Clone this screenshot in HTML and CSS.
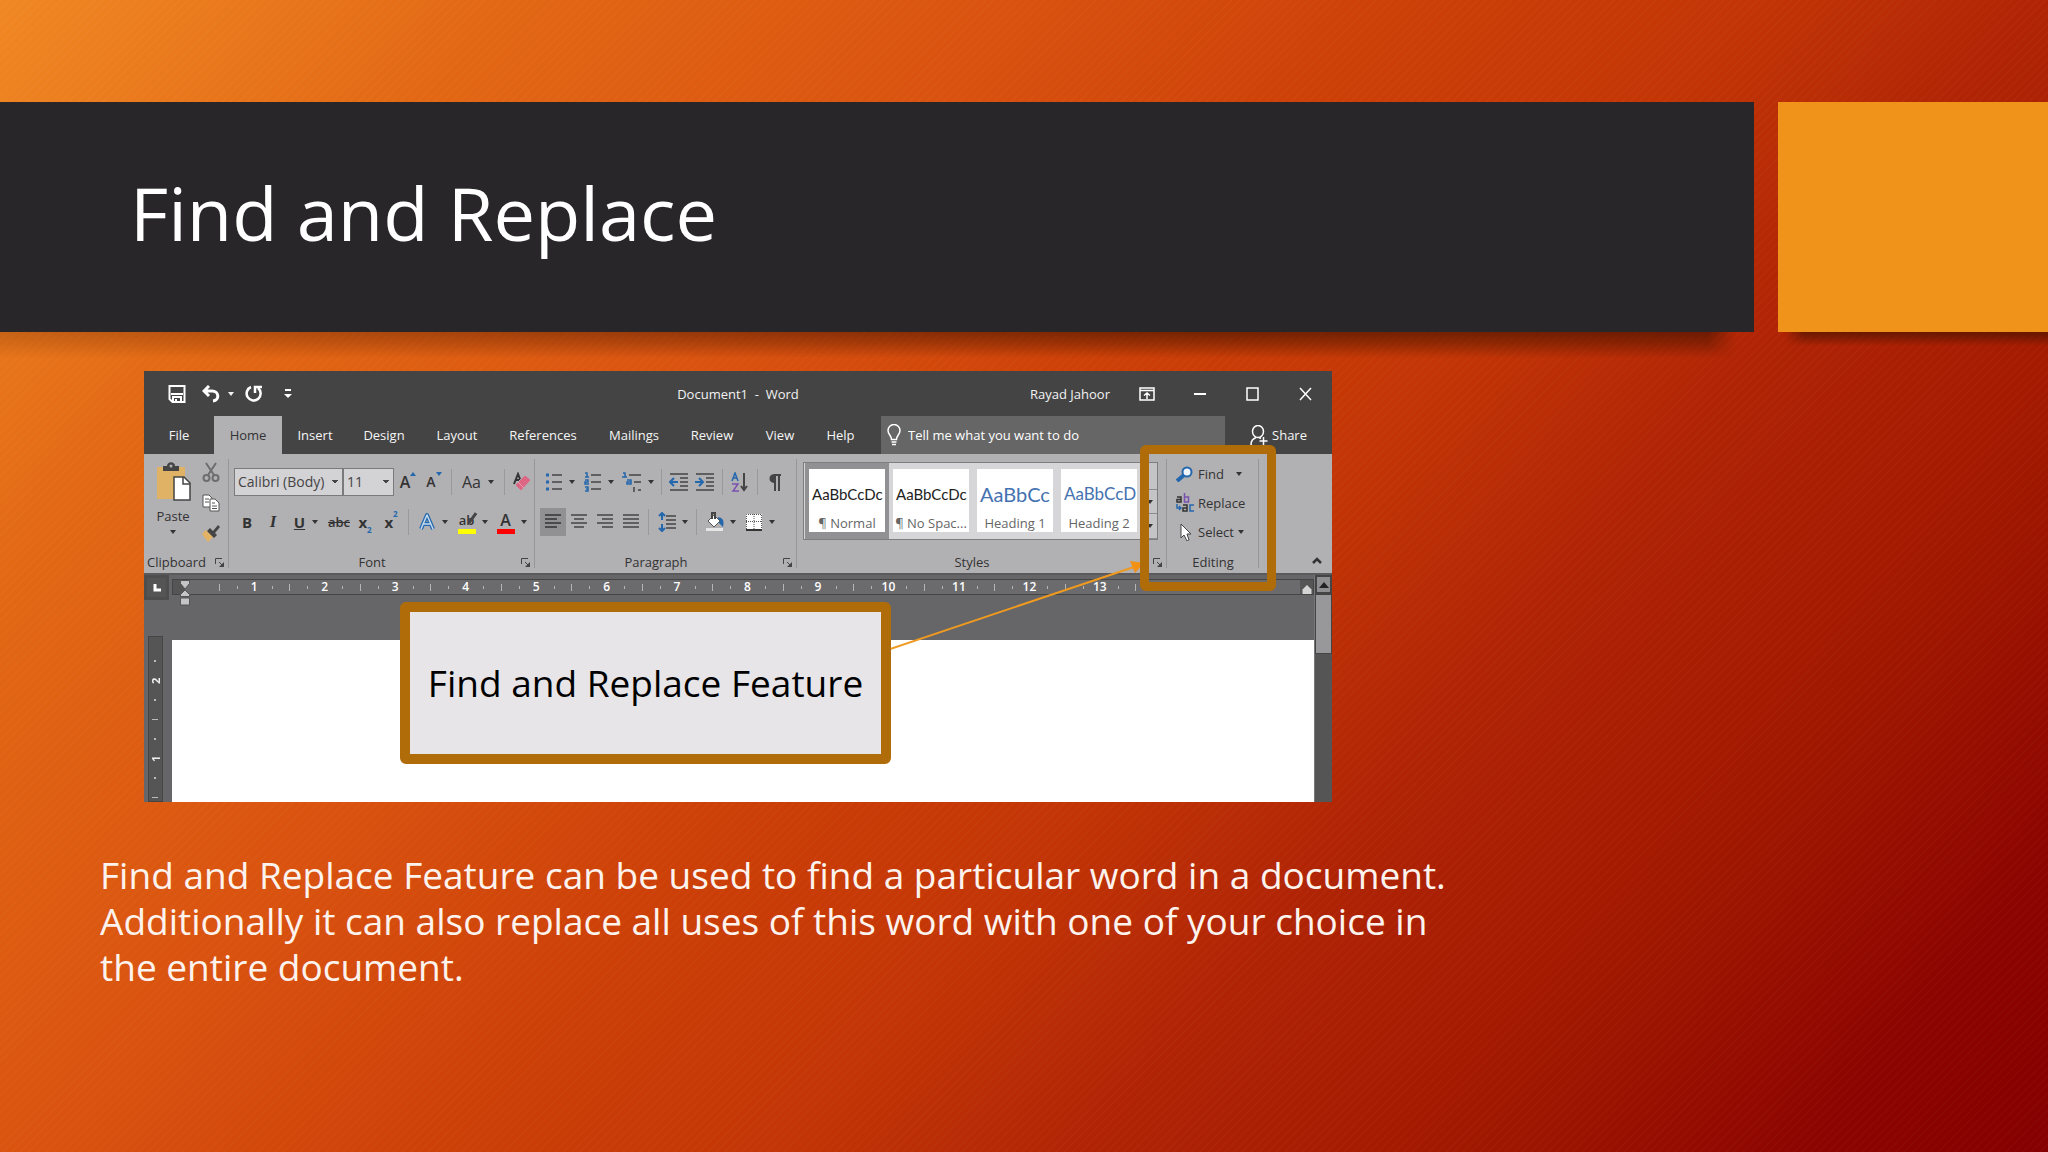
FILE: index.html
```html
<!DOCTYPE html>
<html lang="en">
<head>
<meta charset="utf-8">
<title>Find and Replace</title>
<link rel="stylesheet" href="styles.css">
</head>
<body>
<header class="banner">
  <div class="banner-title"><h1>Find and Replace</h1></div>
  <div class="banner-accent"></div>
</header>
<main class="content">
  <section class="word" aria-label="Word window">
    <div class="titlebar">
      <div class="quick">
        <button class="q-save" aria-label="Save"><svg width="18" height="20" viewBox="0 0 18 20" fill="none" stroke="#fff" stroke-width="2"><path d="M1.500 2h15v16h-12l-3-3z M3 10h12"/><path d="M5 18v-5h8v5" /><path d="M8 15v3"/></svg></button>
        <button class="q-undo" aria-label="Undo"><svg width="18" height="18" viewBox="0 0 18 18" fill="none" stroke="#fff" stroke-width="3"><path d="M7 1L2 6l5 5M2 6h8c7 0 8 9 1 10"/></svg><i class="caret"></i></button>
        <button class="q-redo" aria-label="Repeat"><svg width="18" height="18" viewBox="0 0 18 18" fill="none" stroke="#fff" stroke-width="2.500"><path d="M6 2a7 7 0 1 0 7 1M10 8V2h7"/></svg></button>
        <button class="q-more" aria-label="Customize toolbar"><svg width="8" height="10" viewBox="0 0 8 10" fill="#fff"><path d="M1 0h6v2H1zM0 5h8L4 9z"/></svg></button>
      </div>
      <div class="doc-title">Document1 &nbsp;- &nbsp;Word</div>
      <div class="win">
        <span>Rayad Jahoor</span>
        <button aria-label="Ribbon display options"><svg width="16" height="14" viewBox="0 0 16 14" fill="none" stroke="#fff" stroke-width="1.500"><path d="M1 1h14v12H1zM1 3.500h14M8 12V6M5 8.500L8 6l3 2.500"/></svg></button>
        <button aria-label="Minimize"><svg width="12" height="14" stroke="#fff" stroke-width="2"><path d="M0 7h12"/></svg></button>
        <button aria-label="Maximize"><svg width="13" height="14" fill="none" stroke="#fff" stroke-width="1.500"><path d="M1 1h11v12H1z"/></svg></button>
        <button aria-label="Close"><svg width="13" height="14" stroke="#fff" stroke-width="1.500"><path d="M1 1l11 12M12 1L1 13"/></svg></button>
      </div>
    </div>
    <nav class="tabs">
      <button>File</button><button class="on">Home</button><button>Insert</button><button>Design</button><button>Layout</button><button>References</button><button>Mailings</button><button>Review</button><button>View</button><button>Help</button>
      <label class="tell"><svg width="14" height="22" viewBox="0 0 14 22" fill="none" stroke="#fff" stroke-width="1.500"><path d="M4.500 15.500c0-4-3.500-5-3.500-9a6 6 0 0 1 12 0c0 4-3.500 5-3.500 9zM4.500 18h5M5 20.500h4"/></svg><input type="text" placeholder="Tell me what you want to do" aria-label="Tell me what you want to do"></label>
      <button class="share"><svg width="18" height="20" viewBox="0 0 18 20" fill="none" stroke="#fff" stroke-width="1.500"><ellipse cx="8" cy="6.500" rx="5.500" ry="6"/><path d="M1 20c0-5 2-6 5-7.500M9 12.500l2 1M13.500 12v8M9.500 16h8"/></svg>Share</button>
    </nav>
    <div class="ribbon">
      <section class="group g-clip">
        <div class="tools clip">
          <button class="paste"><svg width="36" height="40" viewBox="0 0 36 40"><path fill="#dfb265" d="M2 5h28v32H2z"/><path fill="#444" d="M8 4h4c0-5 8-5 8 0h4v5H8z"/><circle cx="16" cy="4" r="1.500" fill="#b1b0b3"/><path fill="#fff" stroke="#444" stroke-width="1.500" d="M19 15h10l6 6v17H19z"/><path fill="none" stroke="#444" stroke-width="1.500" d="M28 15v7h7"/></svg>Paste<i class="caret"></i></button>
          <div class="stack">
            <button aria-label="Cut"><svg width="18" height="20" viewBox="0 0 18 20" fill="none" stroke="#6d6d6d" stroke-width="2"><path d="M4 1l8 12M14 1L6 13"/><circle cx="4.500" cy="16" r="3"/><circle cx="13.500" cy="16" r="3"/></svg></button>
            <button aria-label="Copy"><svg width="18" height="18" viewBox="0 0 18 18" fill="#fff" stroke="#555"><path d="M1 1h6l3 3v9H1z"/><path d="M8 5h5l4 4v8H8z"/><path d="M3 5h4M3 8h4M10 9h3M10 12h5M10 14.500h5"/></svg></button>
            <button aria-label="Format painter"><svg width="18" height="18" viewBox="0 0 18 18"><path fill="#e4b265" d="M0 10l4-4 7 7-5 5z"/><path fill="#444" d="M5 7l3-3 3 3 5-6 2 2-5 6 2 2-3 3z"/></svg></button>
          </div>
        </div>
        <footer><span>Clipboard</span><button class="launch" aria-label="Clipboard options"><svg width="9" height="9"><use href="#launch"/></svg></button></footer>
      </section>
      <section class="group g-font">
        <div class="tools">
          <div class="row">
            <select class="family" aria-label="Font"><option>Calibri (Body)</option></select><select class="size" aria-label="Font size"><option>11</option></select>
            <button class="t grow" aria-label="Grow font"><b>A</b><svg width="6" height="4"><path d="M0 4l3-4 3 4z" fill="#2467ad"/></svg></button>
            <button class="t shrink" aria-label="Shrink font"><b>A</b><svg width="6" height="4"><path d="M0 0l3 4 3-4z" fill="#2467ad"/></svg></button>
            <i class="sep"></i><button class="s wide">Aa<i class="caret"></i></button><i class="sep"></i>
            <button class="t" aria-label="Clear formatting"><svg width="18" height="20" viewBox="0 0 18 20"><path d="M1 12L5 2l4 10M2 8h6" fill="none" stroke="#333" stroke-width="2"/><path fill="#dc6684" stroke="#b1b0b3" d="M2 13L12 3l6 5L8 19z"/><path d="M5 10l6 6" stroke="#e6a0b2"/></svg></button>
          </div>
          <div class="row">
            <button class="t bold">B</button><button class="t ital">I</button><button class="s bold"><u>U</u><i class="caret"></i></button><button class="t strike">abc</button><button class="t bold">x<sub>2</sub></button><button class="t bold">x<sup>2</sup></button><i class="sep"></i>
            <button class="s" aria-label="Text effects"><svg width="16" height="18" viewBox="0 0 16 18" fill="none" stroke-linejoin="round"><path d="M2 16L8 2l6 14M4.500 11h7" stroke="#2467ad" stroke-width="4"/><path d="M2 16L8 2l6 14M4.500 11h7" stroke="#c5dcee" stroke-width="1.500"/></svg><i class="caret"></i></button>
            <button class="s mark"><span class="hl">ab</span><svg class="pen" width="10" height="13" viewBox="0 0 10 13"><path d="M9 1L2 11" stroke="#444" stroke-width="3"/></svg><i class="caret"></i></button>
            <button class="s mark"><span class="fc">A</span><i class="caret"></i></button>
          </div>
        </div>
        <footer><span>Font</span><button class="launch" aria-label="Font options"><svg width="9" height="9"><use href="#launch"/></svg></button></footer>
      </section>
      <section class="group g-para">
        <div class="tools">
          <div class="row">
            <button class="s" aria-label="Bullets"><svg width="18" height="20" stroke="#444" stroke-width="1.500"><path d="M7 3h10M7 10h10M7 17h10"/><path stroke="#2467ad" stroke-width="3" d="M1 3h3M1 10h3M1 17h3"/></svg><i class="caret"></i></button><button class="s" aria-label="Numbering"><svg width="18" height="20" fill="none" stroke="#444" stroke-width="1.500"><path d="M7 3h10M7 10h10M7 17h10"/><path stroke="#2467ad" d="M1 1h2v4M1 5h4M1 8h3v2H1v2h4M1 15h3v4H1M2 17h2"/></svg><i class="caret"></i></button><button class="s" aria-label="Multilevel list"><svg width="20" height="20" fill="none" stroke="#444" stroke-width="1.500"><path d="M7 3h12M12 10h7M16 18h3M12 15v5"/><path stroke="#2467ad" d="M1 1h2v4M0 5h5M5 8h4v4H5v-2h4"/></svg><i class="caret"></i></button><i class="sep"></i>
            <button class="t" aria-label="Decrease indent"><svg width="20" height="20" fill="none" stroke="#444" stroke-width="1.500"><path d="M1 2h18M11 6h8M11 10h8M11 14h8M1 18h18"/><path stroke="#2467ad" stroke-width="2" d="M9 10H2M5 6l-4 4 4 4"/></svg></button><button class="t" aria-label="Increase indent"><svg width="20" height="20" fill="none" stroke="#444" stroke-width="1.500"><path d="M1 2h18M11 6h8M11 10h8M11 14h8M1 18h18"/><path stroke="#2467ad" stroke-width="2" d="M0 10h7M4 6l4 4-4 4"/></svg></button><i class="sep"></i>
            <button class="t" aria-label="Sort"><svg width="18" height="20" fill="none" stroke-width="2"><path stroke="#2467ad" stroke-width="1.500" d="M1 9l3-8 3 8M2 6h4"/><path stroke="#7b52b0" stroke-width="1.500" d="M1 12h6l-5 7h6"/><path stroke="#444" d="M13 1v17M10 14l3 4 3-4"/></svg></button><i class="sep"></i><button class="t" aria-label="Show marks"><svg width="12" height="17"><path fill="#444" d="M12 0v2h-1v15H9V2H7v15H5V9C-1 9-1 0 5 0z"/></svg></button>
          </div>
          <div class="row">
            <button class="t sel" aria-label="Align left"><svg width="18" height="16" stroke="#333" stroke-width="1.500"><path d="M1 1h16M1 5h12M1 9h16M1 13h12"/></svg></button><button class="t" aria-label="Center"><svg width="18" height="16" stroke="#444" stroke-width="1.500"><path d="M1 1h16M4 5h10M1 9h16M4 13h10"/></svg></button><button class="t" aria-label="Align right"><svg width="18" height="16" stroke="#444" stroke-width="1.500"><path d="M1 1h16M6 5h11M1 9h16M6 13h11"/></svg></button><button class="t" aria-label="Justify"><svg width="18" height="16" stroke="#444" stroke-width="1.500"><path d="M1 1h16M1 5h16M1 9h16M1 13h16"/></svg></button><i class="sep"></i>
            <button class="s" aria-label="Line spacing"><svg width="18" height="20" fill="none" stroke="#444" stroke-width="1.500"><path d="M8 4h10M8 8h10M8 12h10M8 16h10"/><path stroke="#2467ad" stroke-width="2" d="M4 1v7M1 4l3-3 3 3M4 12v7M1 16l3 3 3-3"/></svg><i class="caret"></i></button><i class="sep"></i><button class="s" aria-label="Shading"><svg width="18" height="20" viewBox="0 0 18 20"><path fill="#2467ad" d="M12 5c6 1 6 5 5 10l-4-4z"/><path fill="#fff" stroke="#555" d="M2 9l6-6 6 6-6 6z"/><path fill="none" stroke="#444" stroke-width="2" d="M6 7V1h3v6"/><path fill="#e6e6e6" d="M0 16h17v3H0z"/></svg><i class="caret"></i></button><button class="s" aria-label="Borders"><svg width="18" height="18"><path fill="#fff" d="M1 1h16v16H1z"/><path fill="none" stroke="#555" stroke-dasharray="1 1" d="M1.500 16V1.500h15V16M9 1v15M1 8.500h16"/><path stroke="#333" stroke-width="2" d="M1 17h16"/></svg><i class="caret"></i></button>
          </div>
        </div>
        <footer><span>Paragraph</span><button class="launch" aria-label="Paragraph options"><svg width="9" height="9"><use href="#launch"/></svg></button></footer>
      </section>
      <section class="group g-styles">
        <div class="tools">
          <div class="gallery">
            <button class="card picked"><span class="sample">AaBbCcDc</span><span>¶ Normal</span></button>
            <button class="card"><span class="sample">AaBbCcDc</span><span>¶ No Spac...</span></button>
            <button class="card"><span class="sample h1">AaBbCc</span><span>Heading 1</span></button>
            <button class="card"><span class="sample h2">AaBbCcD</span><span>Heading 2</span></button>
            <div class="scroller"><button aria-label="Previous styles"></button><button aria-label="Next styles"><i class="caret"></i></button><button aria-label="More styles"><i class="caret"></i></button></div>
          </div>
        </div>
        <footer><span>Styles</span><button class="launch" aria-label="Styles options"><svg width="9" height="9"><use href="#launch"/></svg></button></footer>
      </section>
      <section class="group g-edit">
        <div class="tools edit">
          <button><svg width="18" height="16" viewBox="0 0 18 16"><path d="M1 15l7-6" stroke="#2467ad" stroke-width="4"/><circle cx="11" cy="6" r="4.500" fill="#eef4fa" stroke="#2467ad" stroke-width="2"/></svg>Find<i class="caret far"></i></button>
          <button><svg width="18" height="20" viewBox="0 0 18 20" fill="none" stroke-width="1.500"><path stroke="#333" d="M1 4h4v5H1V6.500h4"/><path stroke="#7b52b0" d="M8.500 0v9h4V4h-4"/><path stroke="#333" d="M7 12h4v6H7v-3h4"/><path stroke="#2467ad" d="M18 12h-4v6h4M1 11v4h4M3 13l2 2-2 2"/></svg>Replace</button>
          <button><svg width="18" height="18" viewBox="0 0 18 18"><path fill="#fff" stroke="#444" d="M5 1v14l3-3 3 6 2-1-2-6h4z"/></svg>Select<i class="caret"></i></button>
        </div>
        <footer><span>Editing</span></footer>
      </section>
      <button class="collapse" aria-label="Collapse ribbon"><svg width="10" height="8" fill="none" stroke="#333" stroke-width="2.500"><path d="M1 6l4-4 4 4"/></svg></button>
    </div>
    <div class="workspace">
      <div class="left-col">
        <div class="tabstop"><svg width="8" height="8" fill="none" stroke="#fff" stroke-width="3"><path d="M2 0v6h6"/></svg></div>
        <div class="vruler"><span>2</span><span>1</span></div>
      </div>
      <div class="middle">
        <div class="hruler"><div class="margin"><svg width="10" height="26" viewBox="0 0 10 26" fill="#c4c4c4" stroke="#555"><path d="M.500.500h9v3L5 9 .500 3.500zM5 10l4.500 4.500v2h-9v-2zM.500 18h9v7h-9z"/></svg></div><span>1</span><span>2</span><span>3</span><span>4</span><span>5</span><span>6</span><span>7</span><span>8</span><span>9</span><span>10</span><span>11</span><span>12</span><span>13</span><span></span><span></span><div class="tail"></div><div class="rmark"><svg width="10" height="9"><path d="M5 0l4.500 4.500V9h-9V4.500z" fill="#d4d4d4"/></svg></div></div>
        <div class="page"></div>
      </div>
      <div class="scroll"><button aria-label="Scroll up"><svg width="10" height="6"><path d="M0 6l5-6 5 6z" fill="#222"/></svg></button><div class="thumb"></div></div>
    </div>
    <svg class="arrow" viewBox="0 0 256 92" fill="none"><path d="M0 89L244 7" stroke="#ee9a20" stroke-width="2"/><path d="M240 1l14 2-9 10z" fill="#f29214"/></svg>
    <div class="highlight"></div>
    <div class="callout">Find and Replace Feature</div>
  </section>
  <p class="caption">Find and Replace Feature can be used to find a particular word in a document. Additionally it can also replace all uses of this word with one of your choice in the entire document.</p>
</main>
<svg width="0" height="0" class="defs"><symbol id="launch" viewBox="0 0 9 9"><path fill="none" stroke="#444" d="M.500 6V.500H7M4 4l4 4"/><path fill="#444" d="M9 4v5H4z"/></symbol></svg>
</body>
</html>
```
FILE: styles.css
```css
* { box-sizing: border-box; }
body {
  margin: 0;
  min-height: 100vh;
  padding-top: 102px;
  overflow-x: hidden;
  font-family: "Open Sans", "Noto Sans", sans-serif;
  background:
    repeating-linear-gradient(135deg, rgba(255,255,255,.02) 0 2px, transparent 2px 6px),
    linear-gradient(130deg, #f08823 0%, #e26714 17%, #d9520f 34%, #cc3f07 47%, #c33505 58%, #b02405 68%, #a01700 81%, #8c0400 92%, #850000 100%);
}
button, select, input { font: inherit; color: inherit; border: 0; background: none; padding: 0; margin: 0; }
svg { display: block; flex: none; }
.defs { position: absolute; }

.banner { display: flex; gap: 24px; min-height: 230px; }
.banner-title { flex: 1; display: flex; align-items: center; padding: 0 130px 8px; background: #282629; position: relative; }
.banner-accent { width: 270px; background: #f0931a; position: relative; }
.banner-title::after, .banner-accent::after {
  content: ""; position: absolute; top: 100%; height: 26px; left: 0; right: 18px;
  background: linear-gradient(rgba(70,20,0,.65), rgba(70,20,0,.4) 45%, transparent);
  mask-image: linear-gradient(90deg, rgba(0,0,0,.3), #000 70%, #000 calc(100% - 28px), transparent);
}
.banner-accent::after { height: 14px; left: 6px; right: 0; mask-image: linear-gradient(90deg, transparent, #000 20px); }
h1 { margin: 0; font-size: 74px; line-height: 96px; font-weight: 400; color: #fff; }

.content { padding: 39px 100px 60px; }
.caption { margin: 50px 0 0; max-width: 1380px; font-size: 37px; line-height: 46px; color: #fdf3ee; }

.word { position: relative; margin-left: 44px; max-width: 1188px; font-size: 13px; line-height: 18px; color: #333; }

.titlebar { display: grid; grid-template-columns: 1fr auto 1fr; align-items: center; height: 45px; background: #444; color: #f2f2f2; }
.quick { display: flex; align-items: center; padding-left: 24px; gap: 11px; }
.quick button { display: flex; align-items: center; gap: 8px; }
.q-save { padding-right: 5px; }
.quick .q-more { padding-left: 10px; }
.doc-title { white-space: nowrap; }
.win { display: flex; align-items: center; justify-content: flex-end; }
.win span { padding-right: 10px; }
.win button { width: 53px; display: flex; justify-content: center; }

.caret { flex: none; width: 0; height: 0; border: 3px solid transparent; border-top: 4px solid currentColor; border-bottom: 0; }

.tabs { display: grid; grid-template-columns: 70px 68px 66px 72px 74px 98px 84px 72px 64px 57px 12px 344px 1fr; height: 38px; background: #444; color: #f5f5f5; }
.tabs .on { background: #b1b0b3; color: #333; }
.tell { grid-column: 12; display: flex; align-items: center; gap: 7px; padding-left: 6px; background: #666; }
.tell input { flex: 1; min-width: 0; }
.tell input::placeholder { color: #fff; opacity: 1; }
.share { display: flex; align-items: center; justify-content: center; gap: 4px; }

.ribbon { display: flex; height: 119px; background: #b1b0b3; }
.group { display: flex; flex-direction: column; flex: none; position: relative; }
.group::after { content: ""; position: absolute; right: 0; top: 5px; bottom: 5px; border-right: 1px solid #969598; }
.g-clip { width: 85px; }
.g-font { width: 306px; }
.g-para { width: 262px; }
.g-styles { width: 370px; }
.g-edit { width: 92px; }
.tools { flex: 1; padding: 8px 5px 0; }
.group footer { display: flex; align-items: center; height: 22px; }
.group footer span { flex: 1; text-align: center; }
.launch { width: 20px; display: flex; justify-content: center; }
.row { display: flex; align-items: center; height: 40px; }
.row .t, .row .s { height: 28px; display: flex; align-items: center; justify-content: center; flex: none; position: relative; }
.t { width: 26px; }
.s { width: 40px; gap: 7px; }
.g-para .s { width: 39px; gap: 6px; }
.s.wide { width: 44px; font-size: 16px; }
.s.mark { width: 39px; gap: 6px; }
.sep { flex: none; width: 9px; height: 26px; background: linear-gradient(#99989b, #99989b) center / 1px 100% no-repeat; }
.sel { background: #919092; }
.bold { font-weight: 700; font-size: 15px; }
.ital { font: italic 700 17px "Liberation Serif", serif; }
.strike { font-weight: 600; text-decoration: line-through; }
.row sub, .row sup { font-size: 8px; line-height: 8px; color: #2467ad; }
.row sub { align-self: flex-end; padding-bottom: 2px; }
.row sup { align-self: flex-start; padding-top: 2px; }
.grow b, .shrink b { font-size: 16px; font-weight: 600; }
.shrink b { font-size: 14px; }
.grow svg, .shrink svg { align-self: flex-start; margin-top: 4px; }
.hl, .fc { width: 18px; line-height: 18px; text-align: center; font-weight: 600; border-bottom: 5px solid #ff0; }
.fc { border-color: #f00; font-size: 16px; }
.pen { position: absolute; left: 14px; top: 4px; }
.family, .size {
  appearance: none; height: 28px; border: 1px solid #7a797c; color: #444; font-size: 14px; padding-left: 3px; border-radius: 0;
  background: linear-gradient(to bottom left, #444 50%, transparent 50%) right 7px center / 3px 4px no-repeat,
    linear-gradient(to bottom right, #444 50%, transparent 50%) right 4px center / 3px 4px no-repeat, #d3d2d5;
}
.family { width: 109px; flex: none; }
.size { width: 51px; flex: none; }
.g-font .grow { margin-left: 1px; }

.clip { display: flex; padding: 8px 0 0; }
.paste { width: 58px; display: flex; flex-direction: column; align-items: center; gap: 6px; line-height: 16px; }
.stack { display: flex; flex-direction: column; gap: 12px; }

.gallery { display: flex; width: 355px; height: 78px; margin-left: 1px; border: 1px solid #7d7c7f; background: #d6d5d8; padding-left: 1px; }
.card { width: 84px; flex: none; border: 4px solid #d6d5d8; border-width: 6px 4px 7px; display: flex; flex-direction: column; align-items: center; justify-content: flex-end; background: #fff; color: #666; white-space: nowrap; }
.card.picked { border-color: #919093; }
.sample { align-self: stretch; padding: 0 0 6px 3px; text-align: left; font-family: Lato, sans-serif; font-size: 15px; line-height: 28px; color: #222; }
.sample.h1 { font-size: 20px; color: #4472b0; }
.sample.h2 { font-size: 17px; color: #4472b0; }
.scroller { flex: 1; display: grid; grid-template-rows: 27px 24px 1fr; }
.scroller button { border-left: 1px solid #8b8a8d; border-bottom: 1px solid #8b8a8d; display: flex; align-items: center; justify-content: center; background: #c4c3c6; }

.edit { display: flex; flex-direction: column; padding: 5px 0 0 9px; }
.edit button { display: flex; align-items: center; gap: 4px; height: 29px; }
.edit .far { margin-left: 8px; }
.collapse { margin: auto 10px 8px auto; }

.workspace { display: flex; height: 229px; background: #666568; border-top: 2px solid #5a595c; }
.left-col { width: 28px; flex: none; }
.tabstop { width: 25px; height: 25px; border: 3px solid #4e4e4e; display: flex; align-items: center; justify-content: center; background: #555; }
.vruler { width: 15px; height: 166px; margin: 36px 0 0 4px; padding-top: 5px; background: #555; border: 1px solid #454545; overflow: hidden; }
.vruler span {
  display: flex; align-items: center; justify-content: center; height: 78px; width: 13px;
  writing-mode: vertical-rl; transform: rotate(180deg); font-size: 11px; font-weight: 700; color: #eee;
  background: linear-gradient(#bbb, #bbb) center 19px / 2px 2px no-repeat, linear-gradient(#bbb, #bbb) center 58px / 2px 2px no-repeat, linear-gradient(#bbb, #bbb) center 0 / 6px 1px no-repeat;
}
.middle { flex: 1; min-width: 0; display: flex; flex-direction: column; }
.hruler { display: flex; height: 16px; margin-top: 4px; border: 1px solid #454545; background: #6b6a6d; color: #fff; font-size: 12px; line-height: 14px; font-weight: 600; }
.hruler .margin { width: 46px; flex: none; padding-left: 7px; background: linear-gradient(#555, #555) left / 12px 100% no-repeat; }
.hruler .margin svg { position: relative; z-index: 1; }
.hruler span {
  flex: 1; text-align: center;
  background: linear-gradient(#b5b5b5, #b5b5b5) 18px center / 1px 3px no-repeat, linear-gradient(#b5b5b5, #b5b5b5) 53px center / 1px 3px no-repeat, linear-gradient(#b5b5b5, #b5b5b5) 0 center / 1px 7px no-repeat;
}
.tail { width: 24px; }
.rmark { width: 13px; display: flex; align-items: flex-end; justify-content: center; background: #555; }
.page { flex: 1; margin-top: 45px; background: #fff; }
.scroll { width: 18px; flex: none; background: #555; border-left: 1px solid #777; }
.scroll button { width: 17px; height: 19px; display: flex; align-items: center; justify-content: center; background: #8f8e91; border: 2px solid #444; }
.thumb { height: 60px; background: #98979a; border: 1px solid #444; }

.highlight { position: absolute; left: 996px; top: 74px; width: 136px; height: 146px; border: 9px solid #b06c09; border-radius: 6px; }
.arrow { position: absolute; left: 746px; top: 189px; width: 256px; height: 92px; }
.callout { position: absolute; left: 256px; top: 231px; width: 491px; height: 162px; display: flex; align-items: center; justify-content: center; border: 10px solid #b06c09; border-radius: 6px; background: #e7e5e8; color: #000; font-size: 37px; line-height: 46px; white-space: nowrap; }
```
